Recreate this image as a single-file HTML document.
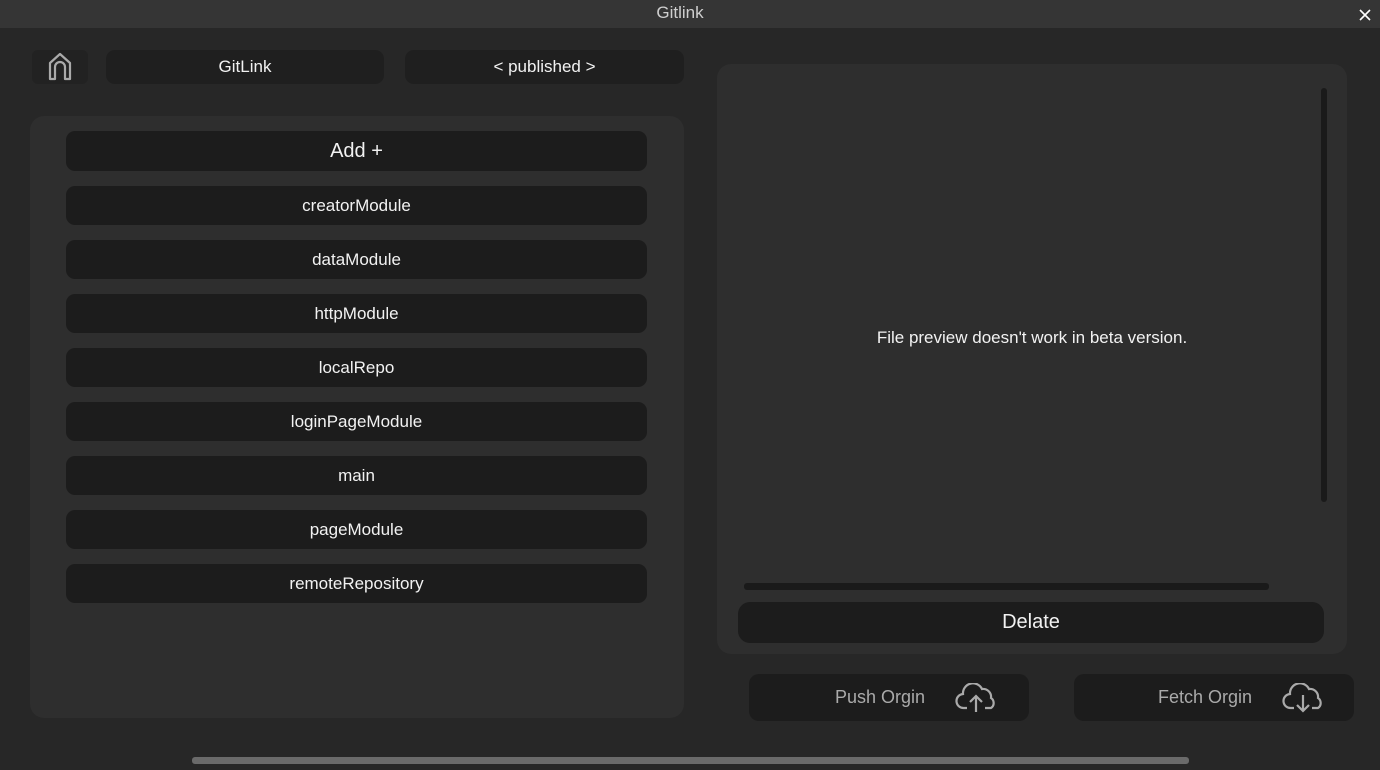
<!DOCTYPE html>
<html><head><style>
body{margin:0;width:1380px;height:770px;background:#272727;font-family:"Liberation Sans",sans-serif;position:relative;overflow:hidden;color:#fff}
.a{position:absolute}
.btn{position:absolute;background:#1c1c1c;border-radius:9px;display:flex;align-items:center;justify-content:center;font-size:17px;color:#f2f2f2}
</style></head><body>
<div class="a" style="left:0;top:0;width:1380px;height:28px;background:#353535"></div>
<div class="a" style="left:0;top:3px;width:1360px;text-align:center;font-size:17px;color:#cfcfcf">Gitlink</div>
<svg class="a" style="left:1359px;top:9px" width="12" height="12" viewBox="0 0 12 12"><path d="M1 1L11 11M11 1L1 11" stroke="#fff" stroke-width="1.6"/></svg>
<div class="btn" style="left:32px;top:50px;width:56px;height:34px;border-radius:6px;background:#222">
<svg width="26" height="30" viewBox="0 0 26 30"><path d="M3 27V11L13 2L23 11V27H18V15a5 5 0 0 0-10 0V27Z" fill="none" stroke="#aaa" stroke-width="2.2" stroke-linejoin="round"/></svg></div>
<div class="btn" style="left:106px;top:50px;width:278px;height:34px;background:#1f1f1f">GitLink</div>
<div class="btn" style="left:405px;top:50px;width:279px;height:34px;background:#1f1f1f">&lt; published &gt;</div>
<div class="a" style="left:30px;top:116px;width:654px;height:602px;background:#2e2e2e;border-radius:14px"></div>
<div class="btn" style="left:66px;top:131px;width:581px;height:40px;font-size:20px">Add +</div>
<div class="btn" style="left:66px;top:186px;width:581px;height:39px">creatorModule</div>
<div class="btn" style="left:66px;top:240px;width:581px;height:39px">dataModule</div>
<div class="btn" style="left:66px;top:294px;width:581px;height:39px">httpModule</div>
<div class="btn" style="left:66px;top:348px;width:581px;height:39px">localRepo</div>
<div class="btn" style="left:66px;top:402px;width:581px;height:39px">loginPageModule</div>
<div class="btn" style="left:66px;top:456px;width:581px;height:39px">main</div>
<div class="btn" style="left:66px;top:510px;width:581px;height:39px">pageModule</div>
<div class="btn" style="left:66px;top:564px;width:581px;height:39px">remoteRepository</div>
<div class="a" style="left:717px;top:64px;width:630px;height:590px;background:#2e2e2e;border-radius:14px"></div>
<div class="a" style="left:1321px;top:88px;width:6px;height:414px;background:#1a1a1a;border-radius:3px"></div>
<div class="a" style="left:744px;top:583px;width:525px;height:7px;background:#1a1a1a;border-radius:3px"></div>
<div class="a" style="left:717px;top:328px;width:630px;text-align:center;font-size:17px;color:#f2f2f2">File preview doesn't work in beta version.</div>
<div class="btn" style="left:738px;top:602px;width:586px;height:41px;font-size:20px;border-radius:12px">Delate</div>
<div class="btn" style="left:749px;top:674px;width:280px;height:47px;border-radius:10px;color:#aaa;font-size:18px"><span style="margin-left:56px">Push Orgin</span>
<svg style="margin-left:30px" width="44" height="30" viewBox="0 0 44 30"><path d="M12 25H9a7 7 0 0 1-1-14 10 10 0 0 1 19-5 8 8 0 0 1 9 9 6 6 0 0 1 0 10H30" fill="none" stroke="#aaa" stroke-width="2.2"/><path d="M21 29V14M15 19l6-6 6 6" fill="none" stroke="#aaa" stroke-width="2.2"/></svg></div>
<div class="btn" style="left:1074px;top:674px;width:280px;height:47px;border-radius:10px;color:#aaa;font-size:18px"><span style="margin-left:56px">Fetch Orgin</span>
<svg style="margin-left:30px" width="44" height="30" viewBox="0 0 44 30"><path d="M12 25H9a7 7 0 0 1-1-14 10 10 0 0 1 19-5 8 8 0 0 1 9 9 6 6 0 0 1 0 10H30" fill="none" stroke="#aaa" stroke-width="2.2"/><path d="M21 12V28M15 22l6 6 6-6" fill="none" stroke="#aaa" stroke-width="2.2"/></svg></div>
<div class="a" style="left:192px;top:757px;width:997px;height:7px;background:#6a6a6a;border-radius:3px"></div>
</body></html>
